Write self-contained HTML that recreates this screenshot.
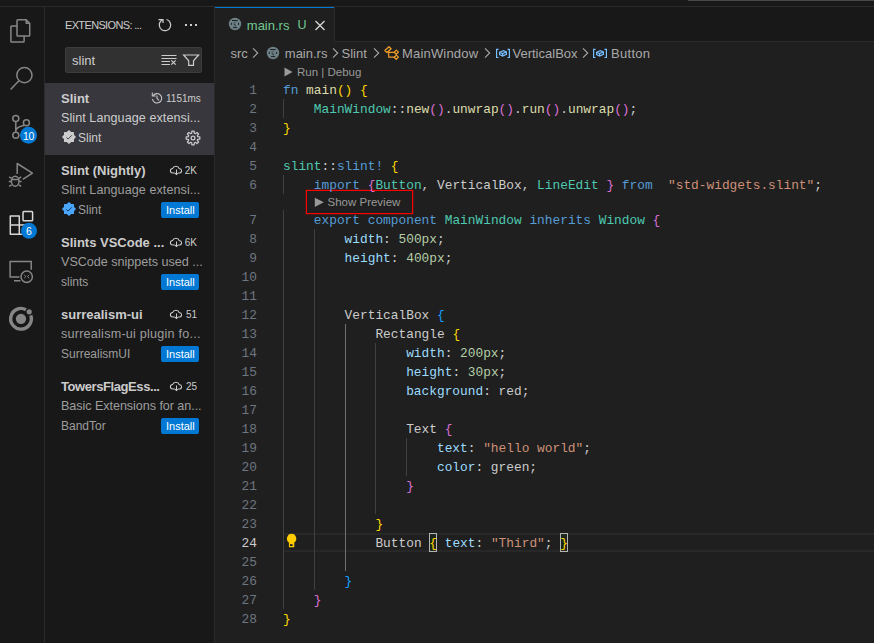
<!DOCTYPE html>
<html><head><meta charset="utf-8">
<style>
*{box-sizing:border-box}
html,body{margin:0;padding:0}
body{width:874px;height:643px;overflow:hidden;position:relative;background:#181818;font-family:"Liberation Sans",sans-serif;color:#cccccc}
.a{position:absolute}
.ln{position:absolute;left:232px;width:25px;text-align:right;font-family:"Liberation Mono",monospace;font-size:12.83px;line-height:19px;color:#6e7681;white-space:pre}
.ln.cur{color:#cccccc}
.cl{position:absolute;z-index:2;left:283px;font-family:"Liberation Mono",monospace;font-size:12.83px;line-height:19px;color:#cccccc;white-space:pre}
.ig{position:absolute;width:1px;background:#404040}
.ig.act{background:#707070}
.t{position:absolute;line-height:1;white-space:pre}
.bm{color:#ffd700}
.bmb{position:absolute;z-index:1;width:8px;height:19px;border:1px solid #b4b4b4;background:rgba(0,100,0,0.1)}
</style></head><body>
<!-- title strip -->
<div class="a" style="left:0;top:6px;width:874px;height:1px;background:#2b2b2b"></div>
<div class="a" style="left:688px;top:0;width:186px;height:1px;background:#484848"></div>
<!-- activity bar border -->
<div class="a" style="left:44px;top:7px;width:1px;height:636px;background:#2b2b2b"></div>
<!-- sidebar border -->
<div class="a" style="left:214px;top:7px;width:1px;height:636px;background:#2b2b2b"></div>
<!-- editor -->
<div class="a" style="left:215px;top:42px;width:659px;height:601px;background:#1f1f1f"></div>
<div class="a" style="left:215px;top:41px;width:659px;height:1px;background:#2b2b2b"></div>
<!-- active tab -->
<div class="a" style="left:215px;top:7px;width:119px;height:35px;background:#1f1f1f;border-top:1px solid #0078d4"></div>
<div class="a" style="left:334px;top:7px;width:1px;height:34px;background:#2b2b2b"></div>
<!-- current line -->
<div class="a" style="left:283px;top:533px;width:591px;height:19px;border-top:2px solid #282828;border-bottom:2px solid #282828"></div>
<div class="ig" style="left:283px;top:99px;height:19px"></div>
<div class="ig" style="left:283px;top:175px;height:19px"></div>
<div class="ig" style="left:283px;top:210px;height:399px"></div>
<div class="ig" style="left:314px;top:229px;height:361px"></div>
<div class="ig act" style="left:345px;top:324px;height:247px"></div>
<div class="ig" style="left:375px;top:343px;height:171px"></div>
<div class="ig" style="left:406px;top:438px;height:38px"></div>
<div class="ln" style="top:81px">1</div>
<div class="cl" style="top:81px"><span style="color:#569cd6">fn</span><span style="color:#cccccc"> </span><span style="color:#dcdcaa">main</span><span style="color:#ffd700">()</span><span style="color:#cccccc"> </span><span style="color:#ffd700">{</span></div>
<div class="ln" style="top:100px">2</div>
<div class="cl" style="top:100px">    <span style="color:#4ec9b0">MainWindow</span><span style="color:#cccccc">::</span><span style="color:#dcdcaa">new</span><span style="color:#da70d6">()</span><span style="color:#cccccc">.</span><span style="color:#dcdcaa">unwrap</span><span style="color:#da70d6">()</span><span style="color:#cccccc">.</span><span style="color:#dcdcaa">run</span><span style="color:#da70d6">()</span><span style="color:#cccccc">.</span><span style="color:#dcdcaa">unwrap</span><span style="color:#da70d6">()</span><span style="color:#cccccc">;</span></div>
<div class="ln" style="top:119px">3</div>
<div class="cl" style="top:119px"><span style="color:#ffd700">}</span></div>
<div class="ln" style="top:138px">4</div>
<div class="cl" style="top:138px"></div>
<div class="ln" style="top:157px">5</div>
<div class="cl" style="top:157px"><span style="color:#4ec9b0">slint</span><span style="color:#cccccc">::</span><span style="color:#569cd6">slint!</span><span style="color:#cccccc"> </span><span style="color:#ffd700">{</span></div>
<div class="ln" style="top:176px">6</div>
<div class="cl" style="top:176px">    <span style="color:#569cd6">import</span><span style="color:#cccccc"> </span><span style="color:#da70d6">{</span><span style="color:#4ec9b0">Button</span><span style="color:#cccccc">, VerticalBox, </span><span style="color:#4ec9b0">LineEdit</span><span style="color:#cccccc"> </span><span style="color:#da70d6">}</span><span style="color:#cccccc"> </span><span style="color:#569cd6">from</span><span style="color:#cccccc">  </span><span style="color:#ce9178">&quot;std-widgets.slint&quot;</span><span style="color:#cccccc">;</span></div>
<div class="ln" style="top:211px">7</div>
<div class="cl" style="top:211px">    <span style="color:#569cd6">export</span><span style="color:#cccccc"> </span><span style="color:#569cd6">component</span><span style="color:#cccccc"> </span><span style="color:#4ec9b0">MainWindow</span><span style="color:#cccccc"> </span><span style="color:#569cd6">inherits</span><span style="color:#cccccc"> </span><span style="color:#4ec9b0">Window</span><span style="color:#cccccc"> </span><span style="color:#da70d6">{</span></div>
<div class="ln" style="top:230px">8</div>
<div class="cl" style="top:230px">        <span style="color:#9cdcfe">width</span><span style="color:#cccccc">: </span><span style="color:#b5cea8">500px</span><span style="color:#cccccc">;</span></div>
<div class="ln" style="top:249px">9</div>
<div class="cl" style="top:249px">        <span style="color:#9cdcfe">height</span><span style="color:#cccccc">: </span><span style="color:#b5cea8">400px</span><span style="color:#cccccc">;</span></div>
<div class="ln" style="top:268px">10</div>
<div class="cl" style="top:268px"></div>
<div class="ln" style="top:287px">11</div>
<div class="cl" style="top:287px"></div>
<div class="ln" style="top:306px">12</div>
<div class="cl" style="top:306px">        <span style="color:#cccccc">VerticalBox</span><span style="color:#cccccc"> </span><span style="color:#179fff">{</span></div>
<div class="ln" style="top:325px">13</div>
<div class="cl" style="top:325px">            <span style="color:#cccccc">Rectangle</span><span style="color:#cccccc"> </span><span style="color:#ffd700">{</span></div>
<div class="ln" style="top:344px">14</div>
<div class="cl" style="top:344px">                <span style="color:#9cdcfe">width</span><span style="color:#cccccc">: </span><span style="color:#b5cea8">200px</span><span style="color:#cccccc">;</span></div>
<div class="ln" style="top:363px">15</div>
<div class="cl" style="top:363px">                <span style="color:#9cdcfe">height</span><span style="color:#cccccc">: </span><span style="color:#b5cea8">30px</span><span style="color:#cccccc">;</span></div>
<div class="ln" style="top:382px">16</div>
<div class="cl" style="top:382px">                <span style="color:#9cdcfe">background</span><span style="color:#cccccc">: red;</span></div>
<div class="ln" style="top:401px">17</div>
<div class="cl" style="top:401px"></div>
<div class="ln" style="top:420px">18</div>
<div class="cl" style="top:420px">                <span style="color:#cccccc">Text</span><span style="color:#cccccc"> </span><span style="color:#da70d6">{</span></div>
<div class="ln" style="top:439px">19</div>
<div class="cl" style="top:439px">                    <span style="color:#9cdcfe">text</span><span style="color:#cccccc">: </span><span style="color:#ce9178">&quot;hello world&quot;</span><span style="color:#cccccc">;</span></div>
<div class="ln" style="top:458px">20</div>
<div class="cl" style="top:458px">                    <span style="color:#9cdcfe">color</span><span style="color:#cccccc">: green;</span></div>
<div class="ln" style="top:477px">21</div>
<div class="cl" style="top:477px">                <span style="color:#da70d6">}</span></div>
<div class="ln" style="top:496px">22</div>
<div class="cl" style="top:496px"></div>
<div class="ln" style="top:515px">23</div>
<div class="cl" style="top:515px">            <span style="color:#ffd700">}</span></div>
<div class="ln cur" style="top:534px">24</div>
<div class="cl" style="top:534px">            <span style="color:#cccccc">Button</span><span style="color:#cccccc"> </span><span class="bm">{</span><span style="color:#cccccc"> </span><span style="color:#9cdcfe">text</span><span style="color:#cccccc">: </span><span style="color:#ce9178">&quot;Third&quot;</span><span style="color:#cccccc">; </span><span class="bm">}</span></div>
<div class="ln" style="top:553px">25</div>
<div class="cl" style="top:553px"></div>
<div class="ln" style="top:572px">26</div>
<div class="cl" style="top:572px">        <span style="color:#179fff">}</span></div>
<div class="ln" style="top:591px">27</div>
<div class="cl" style="top:591px">    <span style="color:#da70d6">}</span></div>
<div class="ln" style="top:610px">28</div>
<div class="cl" style="top:610px"><span style="color:#ffd700">}</span></div>
<div class="t" style="left:65px;top:20.29px;font-size:11px;color:#cccccc;font-weight:normal;letter-spacing:-0.65px">EXTENSIONS: ...</div>
<svg class="a" style="left:150px;top:12px" width="30" height="28" viewBox="150 12 30 28"><path d="M166.6,19.5 A5.7,5.7 0 1 1 160.9,21 L162.6,19.6" fill="none" stroke="#cccccc" stroke-width="1.25"/><path d="M158.5,19.6 H163 V23" fill="none" stroke="#cccccc" stroke-width="1.25"/></svg>
<div class="a" style="left:184.9px;top:24px;width:2px;height:2px;background:#cccccc"></div>
<div class="a" style="left:189.9px;top:24px;width:2px;height:2px;background:#cccccc"></div>
<div class="a" style="left:195.0px;top:24px;width:2px;height:2px;background:#cccccc"></div>
<div class="a" style="left:65px;top:47px;width:137px;height:26px;background:#313131;border:1px solid #3c3c3c;border-radius:2px"></div>
<div class="t" style="left:72px;top:54.00px;font-size:13px;color:#cccccc;font-weight:normal;">slint</div>
<svg class="a" style="left:155px;top:46px" width="50" height="28" viewBox="155 46 50 28"><g stroke="#cccccc" stroke-width="1" fill="none"><path d="M161.5,55.5 H176.5 M161.5,58.5 H176.5 M161.5,61.5 H170 M161.5,64.5 H170"/><path d="M171.3,60.3 L175.7,64.7 M175.7,60.3 L171.3,64.7" stroke-width="1.2"/><path d="M183.6,55 H198.6 L193.5,60.8 V65.3 H188.7 V60.8 Z" stroke-linejoin="miter" stroke-width="1.2"/></g></svg>
<div class="a" style="left:45px;top:83px;width:169px;height:72px;background:#37373d"></div>
<div class="t" style="left:61px;top:92.00px;font-size:13px;color:#cccccc;font-weight:bold;">Slint</div>
<div class="t" style="left:61px;top:111.93px;font-size:12.6px;color:#cccccc;font-weight:normal;letter-spacing:0.06px">Slint Language extensi...</div>
<svg class="a" style="left:61px;top:129px" width="16" height="16" viewBox="-8 -8 16 16"><g fill="#cccccc"><rect x="-5" y="-5" width="10" height="10" rx="0.6"/><rect x="-5" y="-5" width="10" height="10" rx="0.6" transform="rotate(45)"/></g><path d="M-2.6,0.5 L-0.9,2 L2.8,-1.7" fill="none" stroke="#37373d" stroke-width="0.9"/></svg>
<div class="t" style="left:78px;top:131.84px;font-size:12px;color:#cccccc;font-weight:normal;">Slint</div>
<svg class="a" style="left:149px;top:90px" width="16" height="16" viewBox="0 0 16 16"><g fill="none" stroke="#cccccc" stroke-width="1.05"><path d="M4.2,5.6 A4.7,4.7 0 1 1 3.4,9"/><path d="M3.3,2.6 V5.9 H6.6"/><path d="M8,5.6 V8.3 L10,10.3"/></g></svg>
<div class="t" style="left:166px;top:93.53px;font-size:10px;color:#cccccc;font-weight:normal;">1151ms</div>
<svg class="a" style="left:185px;top:130px" width="16" height="16" viewBox="-8 -8 16 16"><g fill="none" stroke="#cccccc" stroke-width="1.25" stroke-linejoin="round"><path d="M-1.31,-4.72 L-1.17,-6.80 L1.17,-6.80 L1.31,-4.72 L2.42,-4.26 L3.98,-5.63 L5.63,-3.98 L4.26,-2.42 L4.72,-1.31 L6.80,-1.17 L6.80,1.17 L4.72,1.31 L4.26,2.42 L5.63,3.98 L3.98,5.63 L2.42,4.26 L1.31,4.72 L1.17,6.80 L-1.17,6.80 L-1.31,4.72 L-2.42,4.26 L-3.98,5.63 L-5.63,3.98 L-4.26,2.42 L-4.72,1.31 L-6.80,1.17 L-6.80,-1.17 L-4.72,-1.31 L-4.26,-2.42 L-5.63,-3.98 L-3.98,-5.63 L-2.42,-4.26 Z"/><circle r="1.9"/></g></svg>
<div class="t" style="left:61px;top:164.00px;font-size:13px;color:#cccccc;font-weight:bold;">Slint (Nightly)</div>
<div class="t" style="left:61px;top:183.93px;font-size:12.6px;color:#9d9d9d;font-weight:normal;letter-spacing:0.06px">Slint Language extensi...</div>
<svg class="a" style="left:61px;top:201px" width="16" height="16" viewBox="-8 -8 16 16"><g fill="#4aa6fb"><rect x="-5" y="-5" width="10" height="10" rx="0.6"/><rect x="-5" y="-5" width="10" height="10" rx="0.6" transform="rotate(45)"/></g><path d="M-2.6,0.5 L-0.9,2 L2.8,-1.7" fill="none" stroke="#1a2a5a" stroke-width="0.9"/></svg>
<div class="t" style="left:78px;top:203.84px;font-size:12px;color:#9d9d9d;font-weight:normal;">Slint</div>
<svg class="a" style="left:168px;top:164px" width="16" height="14" viewBox="0 0 16 14"><g fill="none" stroke="#cccccc" stroke-width="1.05"><path d="M6.9,8.9 H4.6 A2.2,2.2 0 0 1 4.6,4.5 A3.5,3.5 0 0 1 11.2,4.7 A2.1,2.1 0 0 1 11.7,8.9 H10.2"/><path d="M8.5,5.6 V10.6 M7,9.1 L8.5,10.6 L10,9.1"/></g></svg>
<div class="t" style="left:184.7px;top:165.53px;font-size:10px;color:#cccccc;font-weight:normal;">2K</div>
<div class="a" style="left:161px;top:202px;width:38px;height:16px;background:#0078d4;border-radius:2px"></div>
<div class="t" style="left:166px;top:204.69px;font-size:11px;color:#ffffff;font-weight:normal;">Install</div>
<div class="t" style="left:61px;top:236.00px;font-size:13px;color:#cccccc;font-weight:bold;">Slints VSCode ...</div>
<div class="t" style="left:61px;top:255.93px;font-size:12.6px;color:#9d9d9d;font-weight:normal;letter-spacing:-0.02px">VSCode snippets used ...</div>
<div class="t" style="left:61px;top:275.84px;font-size:12px;color:#9d9d9d;font-weight:normal;">slints</div>
<svg class="a" style="left:168px;top:236px" width="16" height="14" viewBox="0 0 16 14"><g fill="none" stroke="#cccccc" stroke-width="1.05"><path d="M6.9,8.9 H4.6 A2.2,2.2 0 0 1 4.6,4.5 A3.5,3.5 0 0 1 11.2,4.7 A2.1,2.1 0 0 1 11.7,8.9 H10.2"/><path d="M8.5,5.6 V10.6 M7,9.1 L8.5,10.6 L10,9.1"/></g></svg>
<div class="t" style="left:184.7px;top:237.53px;font-size:10px;color:#cccccc;font-weight:normal;">6K</div>
<div class="a" style="left:161px;top:274px;width:38px;height:16px;background:#0078d4;border-radius:2px"></div>
<div class="t" style="left:166px;top:276.69px;font-size:11px;color:#ffffff;font-weight:normal;">Install</div>
<div class="t" style="left:61px;top:308.00px;font-size:13px;color:#cccccc;font-weight:bold;">surrealism-ui</div>
<div class="t" style="left:61px;top:327.93px;font-size:12.6px;color:#9d9d9d;font-weight:normal;letter-spacing:0.23px">surrealism-ui plugin fo...</div>
<div class="t" style="left:61px;top:347.84px;font-size:12px;color:#9d9d9d;font-weight:normal;">SurrealismUI</div>
<svg class="a" style="left:168px;top:308px" width="16" height="14" viewBox="0 0 16 14"><g fill="none" stroke="#cccccc" stroke-width="1.05"><path d="M6.9,8.9 H4.6 A2.2,2.2 0 0 1 4.6,4.5 A3.5,3.5 0 0 1 11.2,4.7 A2.1,2.1 0 0 1 11.7,8.9 H10.2"/><path d="M8.5,5.6 V10.6 M7,9.1 L8.5,10.6 L10,9.1"/></g></svg>
<div class="t" style="left:185.9px;top:309.54px;font-size:10px;color:#cccccc;font-weight:normal;">51</div>
<div class="a" style="left:161px;top:346px;width:38px;height:16px;background:#0078d4;border-radius:2px"></div>
<div class="t" style="left:166px;top:348.69px;font-size:11px;color:#ffffff;font-weight:normal;">Install</div>
<div class="t" style="left:61px;top:380.00px;font-size:13px;color:#cccccc;font-weight:bold;letter-spacing:-0.42px">TowersFlagEss...</div>
<div class="t" style="left:61px;top:399.93px;font-size:12.6px;color:#9d9d9d;font-weight:normal;letter-spacing:-0.06px">Basic Extensions for an...</div>
<div class="t" style="left:61px;top:419.84px;font-size:12px;color:#9d9d9d;font-weight:normal;">BandTor</div>
<svg class="a" style="left:168px;top:380px" width="16" height="14" viewBox="0 0 16 14"><g fill="none" stroke="#cccccc" stroke-width="1.05"><path d="M6.9,8.9 H4.6 A2.2,2.2 0 0 1 4.6,4.5 A3.5,3.5 0 0 1 11.2,4.7 A2.1,2.1 0 0 1 11.7,8.9 H10.2"/><path d="M8.5,5.6 V10.6 M7,9.1 L8.5,10.6 L10,9.1"/></g></svg>
<div class="t" style="left:185.9px;top:381.54px;font-size:10px;color:#cccccc;font-weight:normal;">25</div>
<div class="a" style="left:161px;top:418px;width:38px;height:16px;background:#0078d4;border-radius:2px"></div>
<div class="t" style="left:166px;top:420.69px;font-size:11px;color:#ffffff;font-weight:normal;">Install</div>
<svg class="a" style="left:0;top:0" width="44" height="643" viewBox="0 0 44 643">
<path fill="none" stroke="#868686" stroke-width="1.5" stroke-linejoin="round" d="M17.8,19.8 H26.2 L29.7,23.3 V35.2 A0.8,0.8 0 0 1 28.9,36 H17.8 A0.8,0.8 0 0 1 17,35.2 V20.6 A0.8,0.8 0 0 1 17.8,19.8 Z M26.2,19.8 V23.3 H29.7"/>
<path fill="none" stroke="#868686" stroke-width="1.5" stroke-linejoin="round" d="M17,25.9 H11.7 A0.8,0.8 0 0 0 10.9,26.7 V41.2 A0.8,0.8 0 0 0 11.7,42 H23.3 A0.8,0.8 0 0 0 24.1,41.2 V36"/>
<circle cx="24.4" cy="75.2" r="7.6" fill="none" stroke="#868686" stroke-width="1.5"/><path fill="none" stroke="#868686" stroke-width="1.5" d="M18.9,80.7 L10.6,89.5"/>
<g fill="none" stroke="#868686" stroke-width="1.5"><circle cx="15.8" cy="118.6" r="3"/><circle cx="26.4" cy="122.8" r="3"/><circle cx="15.8" cy="135.2" r="3"/><path d="M15.8,121.6 V132.2 M15.8,131 C15.8,128 19,126.5 24,125.5"/></g>
<circle cx="28.5" cy="135.2" r="8.5" fill="#0078d4"/>
<g fill="none" stroke="#868686" stroke-width="1.5" stroke-linejoin="round"><path d="M17.2,174 V163.5 L32.4,173.2 L22.8,179.4"/><ellipse cx="15.2" cy="181.3" rx="3.8" ry="5"/><path d="M11.4,179.6 H19 M9.2,176.8 L11.6,178.3 M21.2,176.8 L18.8,178.3 M8.8,181.5 H11.4 M19,181.5 H21.6 M9.2,186.3 L11.6,184.8 M21.2,186.3 L18.8,184.8"/></g>
<g fill="none" stroke="#d7d7d7" stroke-width="1.5" stroke-linejoin="round"><path d="M10.3,216 H19.3 V234.3 H10.3 Z M10.3,225.1 H26 V234.3 H19.3"/><rect x="23" y="211.6" width="9.6" height="9.2" rx="0.8"/></g>
<circle cx="29" cy="230.8" r="8" fill="#0078d4"/>
<g fill="none" stroke="#868686" stroke-width="1.5"><path d="M31.2,269.7 V261.5 H10.1 V277 H19.4 M14,280.8 H20.4"/><circle cx="26.7" cy="276.7" r="5.7"/><path stroke-width="1" d="M24.2,274.8 L25.9,276.5 L24.2,278.2 M29.2,274.8 L27.5,276.5 L29.2,278.2"/></g>
<path fill="none" stroke="#868686" stroke-width="3.4" d="M30.76,315.35 A10.35,10.35 0 1 1 25.94,309.7"/><circle cx="21" cy="318.8" r="5.15" fill="#868686"/><circle cx="29.2" cy="311.8" r="2.6" fill="#868686"/>
</svg>
<div class="t" style="left:20px;top:130.8px;width:17px;text-align:center;font-size:10.5px;letter-spacing:-0.4px;color:#ffffff">10</div>
<div class="t" style="left:20.5px;top:226.4px;width:17px;text-align:center;font-size:10.5px;color:#ffffff">6</div>
<svg class="a" style="left:228px;top:17px" width="14" height="14" viewBox="-7 -7 14 14"><circle r="6.2" fill="#6d8086"/><g fill="none" stroke="#1f1f1f" stroke-width="1"><path d="M-3,-3.5 H2.7 M-3.7,-1.2 V0.9 M3.6,-1.2 V0.9 M-0.3,0.2 L0.4,2.3 M-2,3.6 H2.2"/><path stroke-width="0.6" stroke="#3a4448" d="M-1,-1.6 H1.2 M-1,-1.6 V1"/></g></svg>
<div class="t" style="left:246.8px;top:18.50px;font-size:13px;color:#73c991;font-weight:normal;">main.rs</div>
<div class="t" style="left:297.5px;top:18.92px;font-size:12.5px;color:#73c991;font-weight:normal;">U</div>
<svg class="a" style="left:312px;top:17px" width="16" height="16" viewBox="312 17 16 16"><path d="M315.5,21 L324.5,30 M324.5,21 L315.5,30" stroke="#d4d4d4" stroke-width="1.35"/></svg>
<div class="t" style="left:230.5px;top:46.50px;font-size:13px;color:#a9a9a9;font-weight:normal;">src</div>
<svg class="a" style="left:252.0px;top:47px" width="8" height="12" viewBox="0 0 8 12"><path d="M1,1.3 L5.7,6 L1,10.7" fill="none" stroke="#a9a9a9" stroke-width="1.1"/></svg>
<svg class="a" style="left:266px;top:46px" width="14" height="14" viewBox="-7 -7 14 14"><circle r="6.2" fill="#6d8086"/><g fill="none" stroke="#1f1f1f" stroke-width="1"><path d="M-3,-3.5 H2.7 M-3.7,-1.2 V0.9 M3.6,-1.2 V0.9 M-0.3,0.2 L0.4,2.3 M-2,3.6 H2.2"/><path stroke-width="0.6" stroke="#3a4448" d="M-1,-1.6 H1.2 M-1,-1.6 V1"/></g></svg>
<div class="t" style="left:284.8px;top:46.50px;font-size:13px;color:#a9a9a9;font-weight:normal;">main.rs</div>
<svg class="a" style="left:331.5px;top:47px" width="8" height="12" viewBox="0 0 8 12"><path d="M1,1.3 L5.7,6 L1,10.7" fill="none" stroke="#a9a9a9" stroke-width="1.1"/></svg>
<div class="t" style="left:341.5px;top:46.50px;font-size:13px;color:#a9a9a9;font-weight:normal;">Slint</div>
<svg class="a" style="left:373.0px;top:47px" width="8" height="12" viewBox="0 0 8 12"><path d="M1,1.3 L5.7,6 L1,10.7" fill="none" stroke="#a9a9a9" stroke-width="1.1"/></svg>
<svg class="a" style="left:380px;top:42px" width="20" height="20" viewBox="380 42 20 20"><g fill="none" stroke="#ee9d28" stroke-width="1.25" stroke-linejoin="round"><path d="M384.8,50.5 L389,46.7 L391.1,48.7 L386.9,52.5 Z"/><path d="M394.2,52.3 L396.4,50.1 L398.4,52.1 L396.2,54.3 Z M394.2,57.3 L396.4,55.1 L398.4,57.1 L396.2,59.3 Z"/><path d="M388.7,51.3 V57.2 H394.4 M388.7,52.3 H394.4"/></g></svg>
<div class="t" style="left:402px;top:46.50px;font-size:13px;color:#a9a9a9;font-weight:normal;letter-spacing:0.18px">MainWindow</div>
<svg class="a" style="left:483.5px;top:47px" width="8" height="12" viewBox="0 0 8 12"><path d="M1,1.3 L5.7,6 L1,10.7" fill="none" stroke="#a9a9a9" stroke-width="1.1"/></svg>
<svg class="a" style="left:494.5px;top:47px" width="16" height="12" viewBox="0 0 16 12"><g fill="none" stroke="#75beff" stroke-width="1.2"><path d="M3.5,2.3 H1.6 V10.5 H3.5 M12.5,2.3 H14.4 V10.5 H12.5"/><path d="M4.6,5.2 L8.4,3.6 L11.4,5 V7.4 L7.6,9 L4.6,7.6 Z M4.6,5.2 L7.6,6.6 L11.4,5 M7.6,6.6 V9"/></g></svg>
<div class="t" style="left:512.5px;top:46.50px;font-size:13px;color:#a9a9a9;font-weight:normal;">VerticalBox</div>
<svg class="a" style="left:581.5px;top:47px" width="8" height="12" viewBox="0 0 8 12"><path d="M1,1.3 L5.7,6 L1,10.7" fill="none" stroke="#a9a9a9" stroke-width="1.1"/></svg>
<svg class="a" style="left:592.0px;top:47px" width="16" height="12" viewBox="0 0 16 12"><g fill="none" stroke="#75beff" stroke-width="1.2"><path d="M3.5,2.3 H1.6 V10.5 H3.5 M12.5,2.3 H14.4 V10.5 H12.5"/><path d="M4.6,5.2 L8.4,3.6 L11.4,5 V7.4 L7.6,9 L4.6,7.6 Z M4.6,5.2 L7.6,6.6 L11.4,5 M7.6,6.6 V9"/></g></svg>
<div class="t" style="left:611px;top:46.50px;font-size:13px;color:#a9a9a9;font-weight:normal;letter-spacing:0.3px">Button</div>
<svg class="a" style="left:284px;top:67px" width="9" height="10" viewBox="0 0 9 10"><path d="M0.5,0.5 L8.5,5 L0.5,9.5 Z" fill="#999999"/></svg>
<div class="t" style="left:297px;top:66.97px;font-size:11.5px;color:#999999;font-weight:normal;">Run | Debug</div>
<svg class="a" style="left:314px;top:197px" width="11" height="11" viewBox="0 0 11 11"><path d="M0.8,0.8 L9.8,5.3 L0.8,9.9 Z" fill="#999999"/></svg>
<div class="t" style="left:327.5px;top:197.27px;font-size:11.5px;color:#999999;font-weight:normal;">Show Preview</div>
<div class="a" style="left:306px;top:190px;width:107px;height:24px;border:1px solid #ff0000;box-shadow:0 0 0 0.4px rgba(255,0,0,0.5)"></div>
<svg class="a" style="left:284px;top:531px" width="16" height="18" viewBox="284 531 16 18"><path d="M291.6,533.8 A4.75,4.75 0 0 1 294.3,542.4 V547.2 H288.9 V542.4 A4.75,4.75 0 0 1 291.6,533.8 Z" fill="#ffcc00"/><rect x="290" y="544.2" width="2.6" height="1.8" fill="#1f1f1f"/></svg>
<div class="bmb" style="left:429px;top:533px"></div><div class="bmb" style="left:560px;top:533px"></div>
</body></html>
